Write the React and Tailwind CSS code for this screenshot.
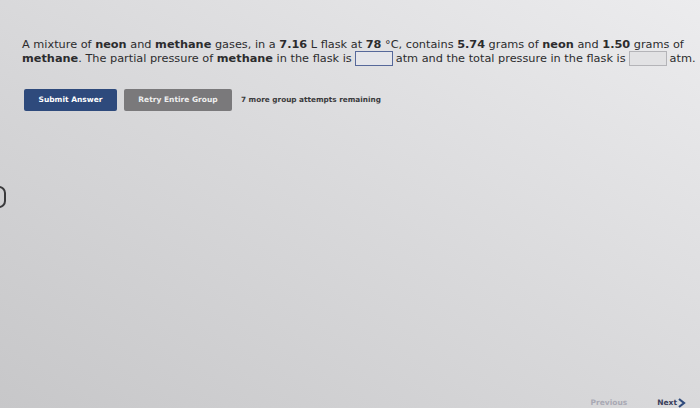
import React from 'react';

function AnswerBox({ active }) {
    return (
        <span
            className={
                'inline-block align-middle w-[38px] h-[15px] mx-[3px] -mt-[2px] ' +
                (active ? 'border border-[#56689a] bg-[#e4e5ea]' : 'border border-[#b4b4b8] bg-[#e2e2e4]')
            }
        />
    );
}

export default function App() {
    return (
        <div className="relative w-[700px] h-[408px] overflow-hidden bg-linear-to-bl from-[#ececee] via-[#d9d9db] to-[#c7c7c9] font-['DejaVu_Sans',sans-serif] text-[#2c2c2e]">
            {/* question text */}
            <div className="pt-[38px] pl-[22px] pr-[4px] text-[11.3px] leading-[14px] whitespace-nowrap">
                <p>
                    A mixture of <b>neon</b> and <b>methane</b> gases, in a <b>7.16</b> L flask at <b>78</b> °C, contains <b>5.74</b> grams of <b>neon</b> and <b>1.50</b> grams of
                    <br />
                    <b>methane</b>. The partial pressure of <b>methane</b> in the flask is
                    <AnswerBox active />
                    atm and the total pressure in the flask is
                    <AnswerBox />
                    atm.
                </p>
            </div>

            {/* actions */}
            <div className="flex items-center gap-[7px] pl-[24px] pt-[23px]">
                <button className="w-[93px] h-[22px] rounded-[2px] bg-[#2e4a7c] text-white text-[7.5px] font-bold">
                    Submit Answer
                </button>
                <button className="w-[108px] h-[22px] rounded-[2px] bg-[#7a797b] text-[#eeeeee] text-[7.5px] font-bold">
                    Retry Entire Group
                </button>
                <span className="ml-[2px] text-[7.3px] font-bold text-[#3a3a3c]">7 more group attempts remaining</span>
            </div>

            {/* edge of a side tab */}
            <div className="absolute left-[-8px] top-[186px] w-[14px] h-[22px] rounded-full border-2 border-[#3a3a3c]" />

            {/* bottom nav */}
            <div className="absolute right-[14px] bottom-[0px] flex items-end gap-[30px] text-[7.5px] font-bold leading-[10px]">
                <span className="text-[#a9a9b4]">Previous</span>
                <span className="flex items-center text-[#3a3f5a]">
                    Next
                    <svg width="8" height="10" viewBox="0 0 8 10" className="ml-[1px]">
                        <path d="M1 1 L6 5 L1 9" fill="none" stroke="#2e4a7c" strokeWidth="2.2" />
                    </svg>
                </span>
            </div>
        </div>
    );
}
